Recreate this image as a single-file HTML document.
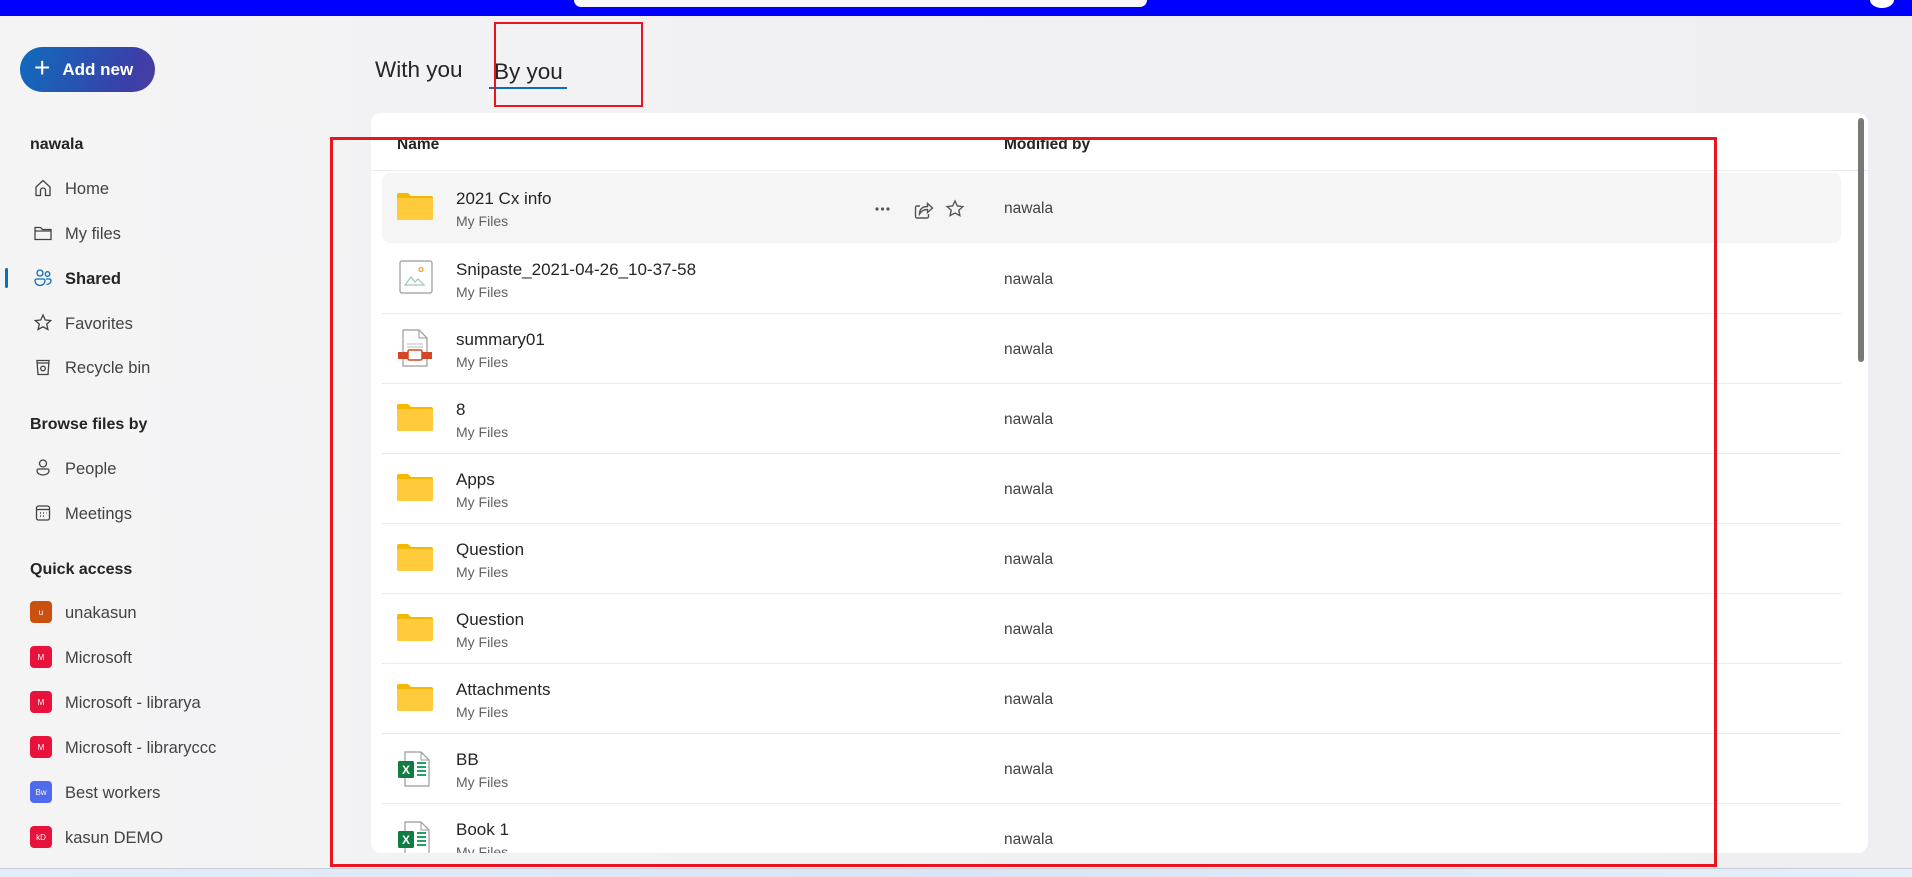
<!DOCTYPE html>
<html><head><meta charset="utf-8"><style>
*{margin:0;padding:0;box-sizing:border-box}
body{width:1912px;height:877px;overflow:hidden;font-family:"Liberation Sans",sans-serif;background:linear-gradient(90deg,#f4f4f5 0%,#f1f1f4 40%,#efeff3 100%);position:relative;color:#242424}
.abs{position:absolute}
.top{left:0;top:0;width:1912px;height:16px;background:#0000ff}
.search{left:574px;top:0;width:573px;height:7px;background:#f8f8f8;border-radius:0 0 12px 12px}
.circ{left:1870px;top:-8px;width:24px;height:16px;background:#fff;border-radius:50%}
.add{left:20px;top:47px;width:135px;height:45px;border-radius:23px;background:linear-gradient(110deg,#0f6cbd,#3b3fa8 80%,#4a3ea0);color:#fff;font-weight:bold;font-size:17px;display:flex;align-items:center;padding-left:14px}
.add span.p{font-size:28px;font-weight:normal;margin-right:12px;line-height:1;margin-top:-3px}
.sh{font-weight:bold;font-size:16px;left:30px;color:#242424}
.nav{left:65px;font-size:16.5px;color:#424242}
.ic{left:33px;width:20px;height:20px}
.av{left:30px;width:22px;height:22px;border-radius:4px;color:#fff;font-size:8px;display:flex;align-items:center;justify-content:center}
.tab{font-size:22.5px;color:#242424}
.card{left:371px;top:113px;width:1497px;height:740px;background:#fff;border-radius:10px;overflow:hidden}
.row{position:absolute;left:11px;width:1459px;height:70px;border-bottom:1px solid #ebebeb}
.t{position:absolute;left:74px;top:16px;font-size:17px;color:#242424}
.s{position:absolute;left:74px;top:40px;font-size:14px;color:#616161}
.m{position:absolute;left:622px;top:27px;font-size:15.5px;color:#424242}
.fi{position:absolute;left:15px;top:20px}
.red{border:2px solid #e8141f}
</style></head><body>
<div class="abs top"></div><div class="abs search"></div><div class="abs circ"></div>
<div class="abs add"><span class="p">+</span>Add new</div>

<div class="abs sh" style="top:136px">nawala</div>
<svg class="abs ic" style="top:178px" viewBox="0 0 20 20" fill="none" stroke="#424242" stroke-width="1.3"><path d="M3 9L10 2.5 17 9V17.5H12.5V12.5a2.5 2.5 0 0 0-5 0V17.5H3Z"/></svg>
<div class="abs nav" style="top:180px">Home</div>
<svg class="abs ic" style="top:223px" viewBox="0 0 20 20" fill="none" stroke="#424242" stroke-width="1.3"><path d="M2 4.5h5.5l2 2H18V16.5H2Z M2 8h16"/></svg>
<div class="abs nav" style="top:225px">My files</div>
<div class="abs" style="left:5px;top:268px;width:3px;height:20px;background:#0f6cbd;border-radius:2px"></div>
<svg class="abs ic" style="top:268px" viewBox="0 0 20 20" fill="none" stroke="#0f6cbd" stroke-width="1.3"><circle cx="7" cy="5" r="3"/><circle cx="14.5" cy="6" r="2.3"/><path d="M2 12.5a1.5 1.5 0 0 1 1.5-1.5h7a1.5 1.5 0 0 1 1.5 1.5C12 16 9 17.5 7 17.5S2 16 2 12.5Z M13 11h3.5A1.5 1.5 0 0 1 18 12.5c0 2.5-2 4-4.5 4"/></svg>
<div class="abs nav" style="top:270px;font-weight:bold;color:#242424">Shared</div>
<svg class="abs ic" style="top:313px" viewBox="0 0 20 20" fill="none" stroke="#424242" stroke-width="1.3"><path d="M10 2l2.3 5 5.4.5-4 3.6 1.2 5.4L10 13.8 5.1 16.5l1.2-5.4-4-3.6 5.4-.5Z"/></svg>
<div class="abs nav" style="top:315px">Favorites</div>
<svg class="abs ic" style="top:357px" viewBox="0 0 20 20" fill="none" stroke="#424242" stroke-width="1.3"><path d="M4 3.5h12l-1 14H5Z M3.5 6h13"/><circle cx="10" cy="11.5" r="2.3"/></svg>
<div class="abs nav" style="top:359px">Recycle bin</div>

<div class="abs sh" style="top:416px">Browse files by</div>
<svg class="abs ic" style="top:458px" viewBox="0 0 20 20" fill="none" stroke="#424242" stroke-width="1.3"><circle cx="10" cy="5.5" r="3.5"/><path d="M4 12.5a1.5 1.5 0 0 1 1.5-1.5h9a1.5 1.5 0 0 1 1.5 1.5c0 3-3 4.5-6 4.5s-6-1.5-6-4.5Z"/></svg>
<div class="abs nav" style="top:460px">People</div>
<svg class="abs ic" style="top:503px" viewBox="0 0 20 20" fill="none" stroke="#424242" stroke-width="1.3"><rect x="3.5" y="3" width="13" height="14" rx="2"/><path d="M3.5 6.5h13"/><path d="M7 10h1M10 10h1M13 10h.5M7 13h1M10 13h1" stroke-width="1.6"/></svg>
<div class="abs nav" style="top:505px">Meetings</div>

<div class="abs sh" style="top:561px">Quick access</div>
<div class="abs av" style="top:601px;background:#ca5010">u</div><div class="abs nav" style="top:604px">unakasun</div>
<div class="abs av" style="top:646px;background:#e8123c">M</div><div class="abs nav" style="top:649px">Microsoft</div>
<div class="abs av" style="top:691px;background:#e8123c">M</div><div class="abs nav" style="top:694px">Microsoft - librarya</div>
<div class="abs av" style="top:736px;background:#e8123c">M</div><div class="abs nav" style="top:739px">Microsoft - libraryccc</div>
<div class="abs av" style="top:781px;background:#4f6bed">Bw</div><div class="abs nav" style="top:784px">Best workers</div>
<div class="abs av" style="top:826px;background:#e8123c">kD</div><div class="abs nav" style="top:829px">kasun DEMO</div>

<div class="abs tab" style="left:375px;top:57px">With you</div>
<div class="abs tab" style="left:494px;top:59px">By you</div>
<div class="abs" style="left:489px;top:87px;width:78px;height:2px;background:#0f6cbd"></div>

<div class="abs card">
 <div class="abs" style="left:26px;top:23px;font-size:15.5px;font-weight:bold">Name</div>
 <div class="abs" style="left:633px;top:23px;font-size:15.5px;font-weight:bold">Modified by</div>
 <div class="abs" style="left:0;top:57px;width:1497px;height:1px;background:#ebebeb"></div>
 <div class="abs" style="left:1487px;top:5px;width:6px;height:244px;background:#787878;border-radius:3px"></div>
</div>
<div class="abs" style="left:371px;top:113px;width:1497px;height:740px;overflow:hidden">
<div class="row" style="top:60px;background:#f5f5f5;border-radius:8px;border:none">
 <svg class="fi" width="36" height="27" viewBox="0 0 36 27"><path d="M0 2a2 2 0 0 1 2-2h9l3 3h20a2 2 0 0 1 2 2V25a2 2 0 0 1-2 2H2a2 2 0 0 1-2-2Z" fill="#f5b800"/><rect x="0" y="5" width="36" height="22" rx="2" fill="#ffcb3c"/></svg>
 <div class="t">2021 Cx info</div><div class="s">My Files</div>
 <svg class="abs" style="left:491px;top:25px" width="120" height="22" viewBox="0 0 120 22" fill="none" stroke="#555" stroke-width="1.4"><circle cx="4" cy="11" r=".9" fill="#555"/><circle cx="9.5" cy="11" r=".9" fill="#555"/><circle cx="15" cy="11" r=".9" fill="#555"/><path d="M47 8H44a1.5 1.5 0 0 0-1.5 1.5v9A1.5 1.5 0 0 0 44 20h10a1.5 1.5 0 0 0 1.5-1.5V16"/><path d="M46.5 16c0-5 3-7.5 8-7.5V5.5l5 4.5-5 4.5V11.5c-3.5 0-6 1-8 4.5Z"/><path d="M82 3l2.4 5 5.4.6-4 3.6 1.1 5.4L82 15l-4.9 2.6 1.1-5.4-4-3.6 5.4-.6Z"/></svg>
 <div class="m">nawala</div>
</div>
<div class="row" style="top:131px">
 <svg class="fi" style="top:16px;left:17px" width="34" height="34" viewBox="0 0 34 34"><rect x="1" y="1" width="32" height="32" rx="2" fill="#fff" stroke="#9a9a9a" stroke-width="1.2"/><circle cx="22" cy="9.5" r="2" fill="none" stroke="#f7a21b" stroke-width="1.3"/><path d="M6 25l6-8 4 5 3-3 6 6Z" fill="none" stroke="#9cc6bc" stroke-width="1.2"/></svg>
 <div class="t">Snipaste_2021-04-26_10-37-58</div><div class="s">My Files</div><div class="m">nawala</div>
</div>
<div class="row" style="top:201px">
 <svg class="fi" style="top:15px" width="36" height="38" viewBox="0 0 36 38"><path d="M6 1h16l8 8v28H6Z" fill="#fff" stroke="#9a9a9a" stroke-width="1.2"/><path d="M22 1v8h8" fill="none" stroke="#9a9a9a"/><path d="M10 15h16M10 18h16" stroke="#bbb"/><rect x="1" y="23" width="34" height="7" fill="#d24726"/><rect x="11" y="21" width="14" height="10" rx="1.5" fill="#fff" stroke="#d24726" stroke-width="1.5"/></svg>
 <div class="t">summary01</div><div class="s">My Files</div><div class="m">nawala</div>
</div>
<div class="row" style="top:271px"><svg class="fi" width="36" height="27" viewBox="0 0 36 27"><path d="M0 2a2 2 0 0 1 2-2h9l3 3h20a2 2 0 0 1 2 2V25a2 2 0 0 1-2 2H2a2 2 0 0 1-2-2Z" fill="#f5b800"/><rect x="0" y="5" width="36" height="22" rx="2" fill="#ffcb3c"/></svg><div class="t">8</div><div class="s">My Files</div><div class="m">nawala</div></div>
<div class="row" style="top:341px"><svg class="fi" width="36" height="27" viewBox="0 0 36 27"><path d="M0 2a2 2 0 0 1 2-2h9l3 3h20a2 2 0 0 1 2 2V25a2 2 0 0 1-2 2H2a2 2 0 0 1-2-2Z" fill="#f5b800"/><rect x="0" y="5" width="36" height="22" rx="2" fill="#ffcb3c"/></svg><div class="t">Apps</div><div class="s">My Files</div><div class="m">nawala</div></div>
<div class="row" style="top:411px"><svg class="fi" width="36" height="27" viewBox="0 0 36 27"><path d="M0 2a2 2 0 0 1 2-2h9l3 3h20a2 2 0 0 1 2 2V25a2 2 0 0 1-2 2H2a2 2 0 0 1-2-2Z" fill="#f5b800"/><rect x="0" y="5" width="36" height="22" rx="2" fill="#ffcb3c"/></svg><div class="t">Question</div><div class="s">My Files</div><div class="m">nawala</div></div>
<div class="row" style="top:481px"><svg class="fi" width="36" height="27" viewBox="0 0 36 27"><path d="M0 2a2 2 0 0 1 2-2h9l3 3h20a2 2 0 0 1 2 2V25a2 2 0 0 1-2 2H2a2 2 0 0 1-2-2Z" fill="#f5b800"/><rect x="0" y="5" width="36" height="22" rx="2" fill="#ffcb3c"/></svg><div class="t">Question</div><div class="s">My Files</div><div class="m">nawala</div></div>
<div class="row" style="top:551px"><svg class="fi" width="36" height="27" viewBox="0 0 36 27"><path d="M0 2a2 2 0 0 1 2-2h9l3 3h20a2 2 0 0 1 2 2V25a2 2 0 0 1-2 2H2a2 2 0 0 1-2-2Z" fill="#f5b800"/><rect x="0" y="5" width="36" height="22" rx="2" fill="#ffcb3c"/></svg><div class="t">Attachments</div><div class="s">My Files</div><div class="m">nawala</div></div>
<div class="row" style="top:621px">
 <svg class="fi" style="top:17px" width="36" height="36" viewBox="0 0 36 36"><path d="M8 1h16l8 8v26H8Z" fill="#fff" stroke="#9a9a9a" stroke-width="1.2"/><path d="M24 1v8h8" fill="none" stroke="#9a9a9a"/><path d="M20 12h9M20 16h9M20 20h9M20 24h9" stroke="#21a366" stroke-width="2"/><rect x="1" y="10" width="16" height="17" rx="1.5" fill="#107c41"/><text x="9" y="23" font-size="12" font-weight="bold" fill="#fff" text-anchor="middle" font-family="Liberation Sans">X</text></svg>
 <div class="t">BB</div><div class="s">My Files</div><div class="m">nawala</div></div>
<div class="row" style="top:691px">
 <svg class="fi" style="top:17px" width="36" height="36" viewBox="0 0 36 36"><path d="M8 1h16l8 8v26H8Z" fill="#fff" stroke="#9a9a9a" stroke-width="1.2"/><path d="M24 1v8h8" fill="none" stroke="#9a9a9a"/><path d="M20 12h9M20 16h9M20 20h9M20 24h9" stroke="#21a366" stroke-width="2"/><rect x="1" y="10" width="16" height="17" rx="1.5" fill="#107c41"/><text x="9" y="23" font-size="12" font-weight="bold" fill="#fff" text-anchor="middle" font-family="Liberation Sans">X</text></svg>
 <div class="t">Book 1</div><div class="s">My Files</div><div class="m">nawala</div></div>
</div>

<div class="abs red" style="left:494px;top:22px;width:149px;height:85px"></div>
<div class="abs red" style="left:330px;top:137px;width:1387px;height:730px;border-width:3px"></div>
<div class="abs" style="left:0;top:868px;width:1912px;height:9px;background:linear-gradient(90deg,#e4ecf7,#dbe4f6 50%,#e6eef8);border-top:1px solid #c8ccd4"></div>
</body></html>
